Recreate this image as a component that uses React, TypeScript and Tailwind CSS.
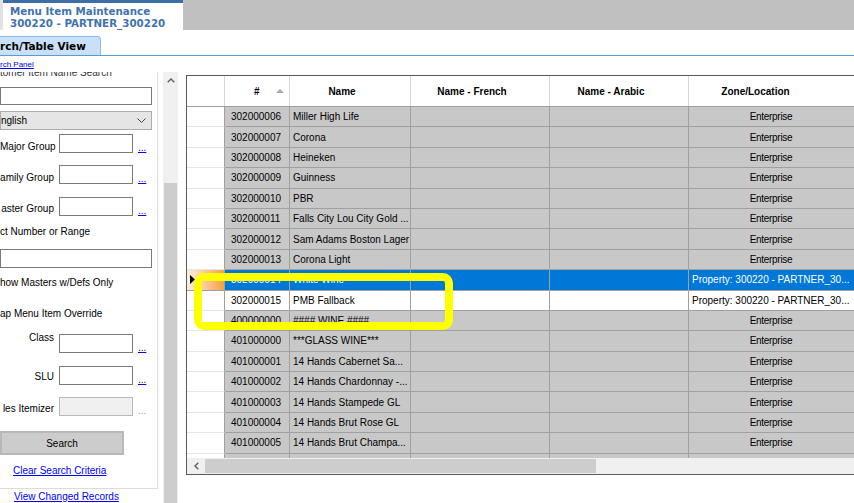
import React from "react";

type Row = { num: string; name: string; zone: string; kind?: "sel" | "white" };

const rows: Row[] = [
  { num: "302000006", name: "Miller High Life", zone: "Enterprise" },
  { num: "302000007", name: "Corona", zone: "Enterprise" },
  { num: "302000008", name: "Heineken", zone: "Enterprise" },
  { num: "302000009", name: "Guinness", zone: "Enterprise" },
  { num: "302000010", name: "PBR", zone: "Enterprise" },
  { num: "302000011", name: "Falls City Lou City Gold ...", zone: "Enterprise" },
  { num: "302000012", name: "Sam Adams Boston Lager", zone: "Enterprise" },
  { num: "302000013", name: "Corona Light", zone: "Enterprise" },
  { num: "302000014", name: "White Wine", zone: "Property: 300220 - PARTNER_30...", kind: "sel" },
  { num: "302000015", name: "PMB Fallback", zone: "Property: 300220 - PARTNER_30...", kind: "white" },
  { num: "400000000", name: "#### WINE ####", zone: "Enterprise" },
  { num: "401000000", name: "***GLASS WINE***", zone: "Enterprise" },
  { num: "401000001", name: "14 Hands Cabernet Sa...", zone: "Enterprise" },
  { num: "401000002", name: "14 Hands Chardonnay -...", zone: "Enterprise" },
  { num: "401000003", name: "14 Hands Stampede GL", zone: "Enterprise" },
  { num: "401000004", name: "14 Hands Brut Rose GL", zone: "Enterprise" },
  { num: "401000005", name: "14 Hands Brut Champa...", zone: "Enterprise" },
  { num: "", name: "", zone: "" },
];

function Dots({ disabled }: { disabled?: boolean }) {
  return (
    <span
      className={
        disabled
          ? "ml-[5px] mt-[7px] leading-[14px] text-[10px] text-[#a0a0a0]"
          : "ml-[5px] mt-[7px] leading-[14px] text-[10px] text-[#0000ff] underline"
      }
    >
      ...
    </span>
  );
}

function LabelRow({ label, mt, labelMt, disabled }: { label: string; mt: string; labelMt: string; disabled?: boolean }) {
  return (
    <div className={`flex h-[19px] ${mt}`}>
      <div className={`w-[54px] text-right leading-[14px] whitespace-nowrap ${labelMt}`}>{label}</div>
      <div
        className={
          disabled
            ? "ml-[5px] w-[74px] h-[19px] border border-[#b9b9b9] bg-[#f0f0f0]"
            : "ml-[5px] w-[74px] h-[19px] border border-[#7a7a7a] bg-white"
        }
      />
      <Dots disabled={disabled} />
    </div>
  );
}

function LeftPanel() {
  return (
    <div className="w-[178px] flex flex-col h-full">
      <div className="h-[16px] pt-[4px] text-[8px] leading-[10px] text-[#0000ff] underline whitespace-nowrap">rch Panel</div>
      <div className="flex flex-1 min-h-0">
        <div className="w-[163px] overflow-hidden text-[10px] text-black">
          <div className="w-[158px] border-r border-b border-[#dcdcdc] flex flex-col pb-[10px]">
            <div className="h-[12px] mt-[-5px] leading-[12px] whitespace-nowrap text-[#333]">tomer Item Name Search</div>
            <div className="mt-[8px] h-[18px] w-[152px] border border-[#7a7a7a] bg-white" />
            <div className="mt-[6px] h-[19px] w-[152px] border border-[#acacac] bg-[#e5e5e5] flex items-center justify-between pr-[5px]">
              <span className="leading-[14px]">nglish</span>
              <svg width="9" height="5" viewBox="0 0 9 5">
                <polyline points="0.5,0.5 4.5,4.5 8.5,0.5" fill="none" stroke="#444" strokeWidth="1" />
              </svg>
            </div>
            <LabelRow label="Major Group" mt="mt-[4px]" labelMt="mt-[6px]" />
            <LabelRow label="amily Group" mt="mt-[12px]" labelMt="mt-[6px]" />
            <LabelRow label="aster Group" mt="mt-[13px]" labelMt="mt-[5px]" />
            <div className="mt-[9px] h-[14px] leading-[14px] whitespace-nowrap">ct Number or Range</div>
            <div className="mt-[10px] h-[19px] w-[152px] border border-[#7a7a7a] bg-white" />
            <div className="mt-[8px] h-[14px] leading-[14px] whitespace-nowrap">how Masters w/Defs Only</div>
            <div className="mt-[17px] h-[14px] leading-[14px] whitespace-nowrap">ap Menu Item Override</div>
            <LabelRow label="Class" mt="mt-[13px]" labelMt="mt-[-3px]" />
            <LabelRow label="SLU" mt="mt-[13px]" labelMt="mt-[4px]" />
            <LabelRow label="les Itemizer" mt="mt-[12px]" labelMt="mt-[5px]" disabled />
            <div className="mt-[15px] h-[24px] w-[124px] border-2 border-[#b8b8b8] bg-[#cccccc] flex items-center justify-center">
              Search
            </div>
            <div className="mt-[9px] h-[14px] leading-[14px] pl-[13px] text-[#0000ff] underline whitespace-nowrap">
              Clear Search Criteria
            </div>
          </div>
          <div className="mt-[1px] h-[14px] leading-[14px] pl-[14px] text-[#0000ff] underline whitespace-nowrap">
            View Changed Records
          </div>
        </div>
        <div className="w-[15px] bg-[#f0f0f0] flex flex-col">
          <div className="h-[17px] flex items-center justify-center">
            <svg width="8" height="5" viewBox="0 0 8 5">
              <polyline points="0.7,4.3 4,1 7.3,4.3" fill="none" stroke="#606060" strokeWidth="1.4" />
            </svg>
          </div>
          <div className="h-[94px]" />
          <div className="flex-1 mx-[1px] bg-[#cdcdcd]" />
        </div>
      </div>
    </div>
  );
}

function Grid() {
  return (
    <div className="flex-1 overflow-hidden pt-[19px]">
      <div className="w-[760px] border-l border-t border-b border-[#5a5a5a] flex flex-col font-['Liberation_Sans',Arial,sans-serif] text-[10px]">
        <div className="flex h-[31px] border-b border-[#a0a0a0] bg-white font-bold text-black">
          <div className="w-[38px] border-r border-[#d6d6d6]" />
          <div className="w-[65px] border-r border-[#d6d6d6] flex items-center pl-[29px]">
            <span>#</span>
            <svg className="ml-[16px]" width="8" height="4" viewBox="0 0 8 4">
              <polygon points="0,4 4,0 8,4" fill="#a9a9a9" />
            </svg>
          </div>
          <div className="w-[121px] border-r border-[#d6d6d6] flex items-center justify-center pr-[16px]">Name</div>
          <div className="w-[139px] border-r border-[#d6d6d6] flex items-center justify-center pr-[16px]">Name - French</div>
          <div className="w-[139px] border-r border-[#d6d6d6] flex items-center justify-center pr-[16px]">Name - Arabic</div>
          <div className="w-[200px] flex items-center justify-center pr-[67px]">Zone/Location</div>
        </div>
        <div className="h-[351px] overflow-hidden flex flex-col">
          {rows.map((r, i) => {
            const cellBg =
              r.kind === "sel" ? "bg-[#0078d7] text-white" : r.kind === "white" ? "bg-white text-black" : "bg-[#c8c8c8] text-black";
            return (
              <div key={i} className="flex h-[20.4px] shrink-0">
                <div
                  className={
                    r.kind === "sel"
                      ? "relative w-[38px] border-r border-b border-[#a0a0a0] bg-linear-to-r from-[#fdf0e0] to-[#f5a040]"
                      : "w-[38px] border-r border-b border-r-[#a0a0a0] border-b-[#e6e6e6] bg-white"
                  }
                >
                  {r.kind === "sel" && (
                    <svg className="absolute left-[3px] top-[5px]" width="5" height="9" viewBox="0 0 5 9">
                      <polygon points="0,0 5,4.5 0,9" fill="#000" />
                    </svg>
                  )}
                </div>
                <div className={`w-[65px] border-r border-b border-[#a0a0a0] flex items-center pl-[6px] whitespace-nowrap ${cellBg}`}>{r.num}</div>
                <div className={`w-[121px] border-r border-b border-[#a0a0a0] flex items-center pl-[3px] whitespace-nowrap overflow-hidden ${cellBg}`}>{r.name}</div>
                <div className={`w-[139px] border-r border-b border-[#a0a0a0] ${cellBg}`} />
                <div className={`w-[139px] border-r border-b border-[#a0a0a0] ${cellBg}`} />
                {r.kind ? (
                  <div className={`w-[200px] border-b border-[#a0a0a0] flex items-center pl-[3px] whitespace-nowrap ${cellBg}`}>{r.zone}</div>
                ) : (
                  <div className={`w-[200px] border-b border-[#a0a0a0] flex items-center justify-center pr-[36px] tracking-[-0.3px] whitespace-nowrap ${cellBg}`}>{r.zone}</div>
                )}
              </div>
            );
          })}
        </div>
        <div className="flex h-[16px] bg-[#f0f0f0]">
          <div className="w-[18px] flex items-center justify-center">
            <svg width="5" height="8" viewBox="0 0 5 8">
              <polyline points="4.3,0.7 1,4 4.3,7.3" fill="none" stroke="#606060" strokeWidth="1.4" />
            </svg>
          </div>
          <div className="w-[391px] my-[1px] bg-[#cdcdcd]" />
          <div className="flex-1" />
        </div>
      </div>
    </div>
  );
}

export default function App() {
  return (
    <div className="relative w-[854px] h-[503px] overflow-hidden bg-[#fdfdfd] font-['Liberation_Sans',Arial,sans-serif] text-black">
      <div className="flex h-[30px]">
        <div className="w-[3px] bg-[#e2e2e2]" />
        <div className="w-[180px] bg-white border-t-[3px] border-[#3e6ea6] pl-[7px] flex flex-col justify-center font-['DejaVu_Sans',Verdana,sans-serif] font-bold text-[10.3px] leading-[12px] text-[#4272ad] whitespace-nowrap">
          <div>Menu Item Maintenance</div>
          <div>300220 - PARTNER_300220</div>
        </div>
        <div className="flex-1 bg-[#c0c0c0]" />
      </div>
      <div className="h-[26px] border-b border-[#5b9bd5] flex items-end bg-white">
        <div className="w-[101px] h-[19px] bg-[#c9e0f8] border-t border-r border-[#8fbbe8] rounded-tr-[4px] font-['DejaVu_Sans',Verdana,sans-serif] font-bold text-[10.5px] leading-[18px] whitespace-nowrap overflow-hidden">
          rch/Table View
        </div>
      </div>
      <div className="flex h-[447px] bg-white">
        <LeftPanel />
        <div className="w-[8px]" />
        <Grid />
      </div>
      <div className="absolute left-[194px] top-[273px] w-[259px] h-[57px] border-[8px] border-[#ffff00] rounded-[10px]" />
    </div>
  );
}
